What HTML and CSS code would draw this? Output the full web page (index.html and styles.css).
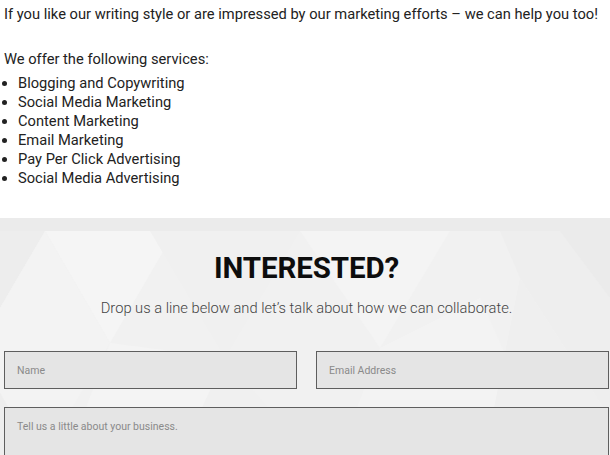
FILE: index.html
```html
<!DOCTYPE html>
<html>
<head>
<meta charset="utf-8">
<link rel="stylesheet" href="styles.css">
</head>
<body>
<section class="intro">
  <p class="lead">If you like our writing style or are impressed by our marketing efforts – we can help you too!</p>
  <p class="offer">We offer the following services:</p>
  <ul class="services">
    <li>Blogging and Copywriting</li>
    <li>Social Media Marketing</li>
    <li>Content Marketing</li>
    <li>Email Marketing</li>
    <li>Pay Per Click Advertising</li>
    <li>Social Media Advertising</li>
  </ul>
</section>
<section class="contact">
  <svg class="pattern" width="610" height="260" viewBox="0 0 610 260" aria-hidden="true">
    <rect x="0" y="0" width="610" height="260" fill="#f1f1f1"/>
    <rect x="0" y="0" width="610" height="13" fill="#ebebeb"/>
    <polygon points="0,13 45,13 0,90" fill="#ededed"/>
    <polygon points="45,13 175,13 110,125" fill="#f5f5f5"/>
    <polygon points="0,90 45,13 110,125 40,245 0,175" fill="#f3f3f3"/>
    <polygon points="0,175 40,245 0,260" fill="#eeeeee"/>
    <polygon points="150,13 300,13 225,140" fill="#f0f0f0"/>
    <polygon points="110,125 225,140 170,260 60,260" fill="#f4f4f4"/>
    <polygon points="300,13 450,13 380,130" fill="#f4f4f4"/>
    <polygon points="380,130 480,80 560,260 330,260" fill="#f3f3f3"/>
    <polygon points="500,13 570,13 610,80 610,200 520,60" fill="#eeeeee"/>
    <polygon points="520,60 610,200 610,260 480,260" fill="#efefef"/>
    <polygon points="560,13 610,13 610,80" fill="#ebebeb"/>
    <polygon points="225,140 330,260 170,260" fill="#f0f0f0"/>
  </svg>
  <div class="contact-inner">
    <h2 class="title">INTERESTED?</h2>
    <p class="subtitle">Drop us a line below and let’s talk about how we can collaborate.</p>
    <form class="form">
      <div class="row">
        <input class="field" type="text" placeholder="Name">
        <input class="field" type="text" placeholder="Email Address">
      </div>
      <textarea class="field message" placeholder="Tell us a little about your business."></textarea>
    </form>
  </div>
</section>
</body>
</html>
```
FILE: styles.css
```css
* { box-sizing: border-box; }
html, body { margin: 0; padding: 0; background: #fff; }
body {
  font-family: Roboto, "Liberation Sans", Arial, sans-serif;
  color: #222;
  width: 610px;
  overflow: hidden;
}
.intro {
  padding: 2px 0 30px 4px;
  font-size: 14.7px;
}
.lead {
  margin: 0;
  line-height: 24px;
  white-space: nowrap;
}
.offer {
  margin: 21px 0 0;
  line-height: 24px;
}
.services {
  margin: 3px 0 0;
  padding-left: 14px;
  line-height: 19px;
}
.contact {
  position: relative;
  height: 240px;
  overflow: hidden;
}
.pattern {
  position: absolute;
  left: 0;
  top: 0;
}
.contact-inner {
  position: relative;
  padding: 34px 1px 0 4px;
}
.title {
  margin: 0;
  text-align: center;
  font-size: 29.5px;
  line-height: 32px;
  font-weight: 700;
  color: #0d0d0d;
  letter-spacing: -0.1px;
}
.subtitle {
  margin: 14px 0 0;
  text-align: center;
  font-size: 14.7px;
  font-weight: 300;
  line-height: 20px;
  color: #444;
}
.form {
  margin-top: 33px;
  display: flex;
  flex-direction: column;
  gap: 18px;
}
.row {
  display: flex;
  gap: 19px;
}
.field {
  flex: 1;
  height: 38px;
  border: 1px solid #5e5e5e;
  background: #e5e5e5;
  font-family: Roboto, "Liberation Sans", Arial, sans-serif;
  font-size: 10.5px;
  padding: 0 12px;
  color: #444;
  outline: none;
  border-radius: 0;
}
.field::placeholder { color: #8a8a8a; }
.message {
  flex: none;
  height: 100px;
  width: 100%;
  padding-top: 12px;
  resize: none;
}
```
